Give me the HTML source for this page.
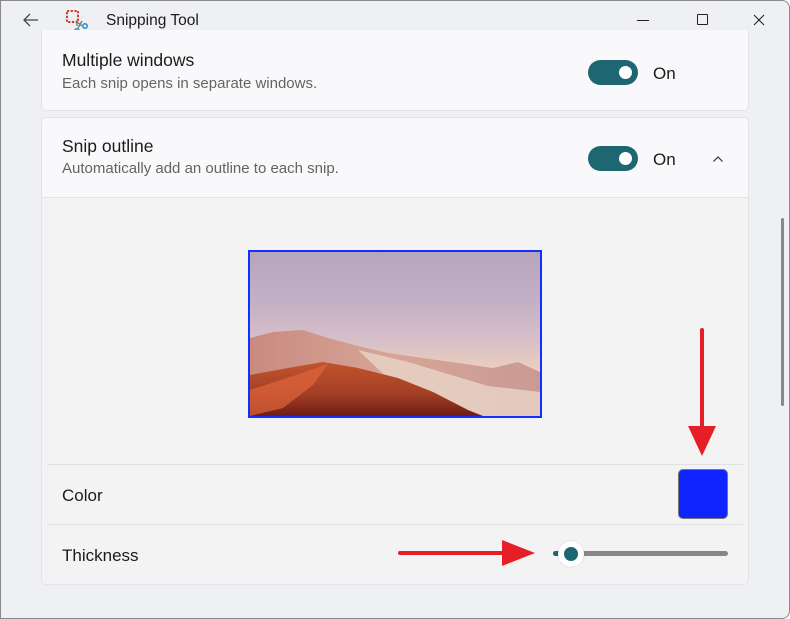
<!DOCTYPE html>
<html><head><meta charset="utf-8">
<style>
*{margin:0;padding:0;box-sizing:border-box}
html,body{width:790px;height:619px;overflow:hidden;background:#fff}
body{font-family:"Liberation Sans",sans-serif;color:#1b1b1b;position:relative}
.win{position:absolute;left:0;top:0;width:790px;height:619px;background:#eef0f3;border-radius:0 8px 8px 0}
.frame{position:absolute;left:0;top:0;width:790px;height:619px;border:1px solid #8a8a8a;border-radius:0 8px 8px 0;pointer-events:none}
.abs{position:absolute}
.card{position:absolute;background:#f9f9fb;border:1px solid #e2e4e8;border-radius:5px}
.t{font-size:17.5px;color:#1b1b1b}
.s{font-size:15px;color:#646464}
.tog{position:absolute;width:50px;height:25px;border-radius:13px;background:#1e6672}
.tog::after{content:"";position:absolute;right:6px;top:6px;width:13px;height:13px;border-radius:50%;background:#fff}
.on{position:absolute;font-size:17px}
</style></head><body>
<div class="win">
  <svg class="abs" style="left:21px;top:11px" width="20" height="18" viewBox="0 0 20 18"><path d="M17 9H3M9 3L3 9l6 6" fill="none" stroke="#444" stroke-width="1.3"/></svg>
  <svg class="abs" style="left:64px;top:9px" width="26" height="26" viewBox="0 0 26 26">
    <rect x="3" y="2" width="11" height="11" fill="none" stroke="#d33a22" stroke-width="2" stroke-dasharray="2.2 1.5"/>
    <path d="M13 11v6M13 13l5 4M18 12l-4 7" stroke="#777" stroke-width="1.3" fill="none"/>
    <circle cx="13" cy="22" r="2.2" fill="none" stroke="#1a8fd6" stroke-width="1.5"/>
    <circle cx="21" cy="17" r="2.2" fill="none" stroke="#1a8fd6" stroke-width="1.5"/>
  </svg>
  <div class="abs" style="left:106px;top:12px;font-size:15.5px">Snipping Tool</div>
  <div class="abs" style="left:637px;top:20px;width:12px;height:1px;background:#222"></div>
  <div class="abs" style="left:697px;top:14px;width:11px;height:11px;border:1.2px solid #222;border-radius:1px"></div>
  <svg class="abs" style="left:753px;top:14px" width="12" height="12" viewBox="0 0 12 12"><path d="M1 1l10 10M11 1L1 11" stroke="#222" stroke-width="1.1"/></svg>

  <div class="card" style="left:41px;top:30px;width:708px;height:81px;border-top:none;border-radius:0 0 5px 5px"></div>
  <div class="abs t" style="left:62px;top:50px">Multiple windows</div>
  <div class="abs s" style="left:62px;top:75px">Each snip opens in separate windows.</div>
  <div class="tog" style="left:588px;top:60px"></div>
  <div class="on" style="left:653px;top:64px">On</div>

  <div class="card" style="left:41px;top:117px;width:708px;height:468px;background:#f3f3f3"></div>
  <div class="abs" style="left:42px;top:118px;width:706px;height:80px;background:#f9f9fb;border-bottom:1px solid #e2e4e8;border-radius:5px 5px 0 0"></div>
  <div class="abs t" style="left:62px;top:136px">Snip outline</div>
  <div class="abs s" style="left:62px;top:160px">Automatically add an outline to each snip.</div>
  <div class="tog" style="left:588px;top:146px"></div>
  <div class="on" style="left:653px;top:150px">On</div>
  <svg class="abs" style="left:712px;top:155px" width="12" height="8" viewBox="0 0 12 8"><path d="M1.5 6.5L6 2l4.5 4.5" fill="none" stroke="#333" stroke-width="1.2"/></svg>

  <svg class="abs" style="left:248px;top:250px" width="294" height="168" viewBox="0 0 294 168">
    <defs>
      <linearGradient id="sky" x1="0" y1="0" x2="0" y2="1">
        <stop offset="0" stop-color="#b6a6bb"/><stop offset="0.3" stop-color="#c2b0c6"/>
        <stop offset="0.55" stop-color="#d8c0c8"/><stop offset="0.75" stop-color="#f0d2b8"/><stop offset="1" stop-color="#e9c7b4"/>
      </linearGradient>
      <linearGradient id="back" x1="0" y1="0" x2="1" y2="0">
        <stop offset="0" stop-color="#c98a80"/><stop offset="0.5" stop-color="#d7a597"/><stop offset="1" stop-color="#c99a93"/>
      </linearGradient>
      <linearGradient id="front" x1="0" y1="0" x2="0" y2="1">
        <stop offset="0" stop-color="#c2542f"/><stop offset="0.6" stop-color="#a23e24"/><stop offset="1" stop-color="#6e1c16"/>
      </linearGradient>
    </defs>
    <rect x="2" y="2" width="290" height="164" fill="url(#sky)"/>
    <path d="M2 88 L25 82 L55 80 L80 88 L110 96 L140 103 L175 108 L210 113 L245 118 L270 112 L292 122 L292 166 L2 166Z" fill="url(#back)"/>
    <path d="M110 100 L160 112 L200 124 L240 136 L292 142 L292 166 L180 166Z" fill="#e8d2c4" opacity="0.85"/>
    <path d="M2 125 L40 118 L75 112 L110 118 L150 128 L185 142 L220 160 L235 166 L2 166Z" fill="url(#front)"/>
    <path d="M2 140 L45 126 L80 114 L65 135 L35 158 L2 166Z" fill="#e0653a" opacity="0.7"/>
    <rect x="1" y="1" width="292" height="166" fill="none" stroke="#1130ff" stroke-width="2"/>
  </svg>

  <div class="abs" style="left:47px;top:464px;width:696px;height:1px;background:#dfe0e3"></div>
  <div class="abs t" style="left:62px;top:486px;font-size:17px">Color</div>
  <div class="abs" style="left:678px;top:469px;width:50px;height:50px;background:#0f24ff;border:1px solid #777;border-radius:5px"></div>
  <div class="abs" style="left:47px;top:524px;width:696px;height:1px;background:#dfe0e3"></div>
  <div class="abs t" style="left:62px;top:546px;font-size:17px">Thickness</div>
  <div class="abs" style="left:553px;top:551px;width:175px;height:5px;border-radius:3px;background:#878787"></div>
  <div class="abs" style="left:553px;top:551px;width:12px;height:5px;border-radius:3px;background:#1e6672"></div>
  <div class="abs" style="left:558px;top:541px;width:26px;height:26px;border-radius:50%;background:#fff;box-shadow:0 0 1px rgba(0,0,0,.3)"></div>
  <div class="abs" style="left:564px;top:547px;width:14px;height:14px;border-radius:50%;background:#1e6672"></div>

  <svg class="abs" style="left:395px;top:320px" width="350" height="250" viewBox="395 320 350 250">
    <path d="M702 330 L702 428" stroke="#e61e25" stroke-width="4" stroke-linecap="round"/>
    <path d="M688 426 L716 426 L702 456Z" fill="#e61e25"/>
    <path d="M400 553 L505 553" stroke="#e61e25" stroke-width="4" stroke-linecap="round"/>
    <path d="M502 540 L535 553 L502 566Z" fill="#e61e25"/>
  </svg>

  <div class="abs" style="left:781px;top:218px;width:3px;height:188px;border-radius:2px;background:#8a8a8a"></div>
</div>
<div class="frame"></div>
</body></html>
